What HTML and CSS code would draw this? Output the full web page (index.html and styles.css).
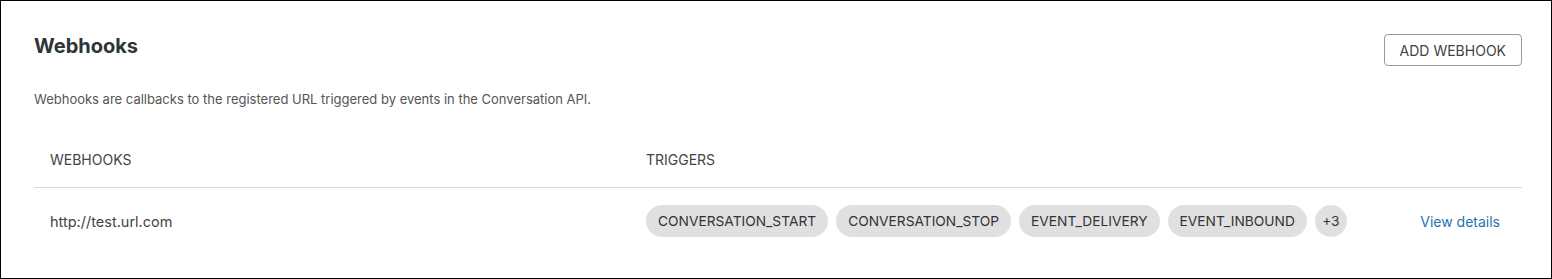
FILE: index.html
```html
<!DOCTYPE html>
<html>
<head>
<meta charset="utf-8">
<link rel="stylesheet" href="styles.css">
</head>
<body>
<div class="frame">
  <div class="top">
    <h1 class="title">Webhooks</h1>
    <button class="btn">ADD WEBHOOK</button>
  </div>
  <p class="desc">Webhooks are callbacks to the registered URL triggered by events in the Conversation API.</p>
  <div class="table">
    <div class="thead">
      <div class="col1">WEBHOOKS</div>
      <div class="col2">TRIGGERS</div>
    </div>
    <div class="trow">
      <div class="col1 url">http://test.url.com</div>
      <div class="col2 chips">
        <span class="chip">CONVERSATION_START</span>
        <span class="chip">CONVERSATION_STOP</span>
        <span class="chip">EVENT_DELIVERY</span>
        <span class="chip">EVENT_INBOUND</span>
        <span class="chip more">+3</span>
      </div>
      <div class="col3"><a class="link" href="#">View details</a></div>
    </div>
  </div>
</div>
</body>
</html>
```
FILE: styles.css
```css
* { box-sizing: border-box; }
html, body { margin: 0; padding: 0; background: #fff; }
body { font-family: Inter, "Noto Sans", sans-serif; color: #333; }
.frame {
  width: 1552px;
  height: 279px;
  border: 1px solid #000;
  padding: 33px 29px 0 33px;
}
.top {
  display: flex;
  justify-content: space-between;
  align-items: flex-start;
  height: 32px;
}
.title {
  margin: 0;
  font-size: 20px;
  line-height: 24px;
  font-weight: 700;
  color: #2f3437;
}
.btn {
  height: 32px;
  padding: 0 15px;
  border: 1px solid #999;
  border-radius: 4px;
  background: #fff;
  font-family: inherit;
  font-size: 14px;
  color: #444;
  cursor: pointer;
}
.desc {
  margin: 23px 0 0;
  font-size: 13px;
  line-height: 20px;
  color: #555;
}
.table { margin-top: 23px; }
.thead, .trow {
  display: grid;
  grid-template-columns: 596px 1fr 152px;
  align-items: center;
}
.thead {
  height: 56px;
  border-bottom: 1px solid #dcdcdc;
  font-size: 14px;
  color: #444;
}
.trow {
  height: 65px;
  padding-top: 1px;
  font-size: 14.5px;
  color: #444;
}
.col1, .col2 { padding-left: 16px; }
.thead .col2 { grid-column: 2 / 4; }
.chips { display: flex; gap: 8px; }
.chip {
  display: inline-flex;
  align-items: center;
  height: 32px;
  padding: 0 12px;
  border-radius: 16px;
  background: #e0e0e0;
  font-size: 13.75px;
  color: #333;
}
.chip.more { width: 32px; padding: 0; justify-content: center; }
.col3 { display: flex; justify-content: flex-end; padding-right: 22px; }
.link { color: #1f73b7; text-decoration: none; font-size: 14px; }
```
